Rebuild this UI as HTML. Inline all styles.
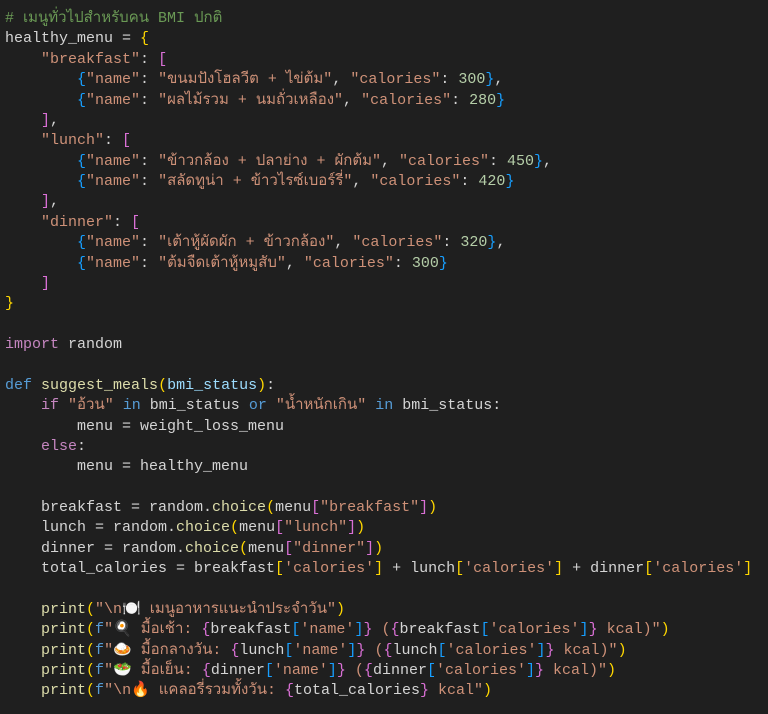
<!DOCTYPE html>
<html><head><meta charset="utf-8"><style>
html,body{margin:0;padding:0;background:#1f1f1f;width:768px;height:714px;overflow:hidden}
pre{margin:0;position:absolute;left:5px;top:9px;font-family:"Liberation Mono","DejaVu Sans Mono",monospace;font-size:15px;line-height:20.38px;color:#d4d4d4}
.c{color:#6a9955}.s{color:#ce9178}.k{color:#569cd6}.p{color:#c586c0}.f{color:#dcdcaa}.n{color:#b5cea8}.v{color:#9cdcfe}
.y{color:#ffd700}.m{color:#da70d6}.b{color:#179fff}
</style></head><body><pre><span class="c"># เมนูทั่วไปสำหรับคน BMI ปกติ</span>
healthy_menu = <span class="y">{</span>
    <span class="s">"breakfast"</span>: <span class="m">[</span>
        <span class="b">{</span><span class="s">"name"</span>: <span class="s">"ขนมปังโฮลวีต + ไข่ต้ม"</span>, <span class="s">"calories"</span>: <span class="n">300</span><span class="b">}</span>,
        <span class="b">{</span><span class="s">"name"</span>: <span class="s">"ผลไม้รวม + นมถั่วเหลือง"</span>, <span class="s">"calories"</span>: <span class="n">280</span><span class="b">}</span>
    <span class="m">]</span>,
    <span class="s">"lunch"</span>: <span class="m">[</span>
        <span class="b">{</span><span class="s">"name"</span>: <span class="s">"ข้าวกล้อง + ปลาย่าง + ผักต้ม"</span>, <span class="s">"calories"</span>: <span class="n">450</span><span class="b">}</span>,
        <span class="b">{</span><span class="s">"name"</span>: <span class="s">"สลัดทูน่า + ข้าวไรซ์เบอร์รี่"</span>, <span class="s">"calories"</span>: <span class="n">420</span><span class="b">}</span>
    <span class="m">]</span>,
    <span class="s">"dinner"</span>: <span class="m">[</span>
        <span class="b">{</span><span class="s">"name"</span>: <span class="s">"เต้าหู้ผัดผัก + ข้าวกล้อง"</span>, <span class="s">"calories"</span>: <span class="n">320</span><span class="b">}</span>,
        <span class="b">{</span><span class="s">"name"</span>: <span class="s">"ต้มจืดเต้าหู้หมูสับ"</span>, <span class="s">"calories"</span>: <span class="n">300</span><span class="b">}</span>
    <span class="m">]</span>
<span class="y">}</span>

<span class="p">import</span> random

<span class="k">def</span> <span class="f">suggest_meals</span><span class="y">(</span><span class="v">bmi_status</span><span class="y">)</span>:
    <span class="p">if</span> <span class="s">"อ้วน"</span> <span class="k">in</span> bmi_status <span class="k">or</span> <span class="s">"น้ำหนักเกิน"</span> <span class="k">in</span> bmi_status:
        menu = weight_loss_menu
    <span class="p">else</span>:
        menu = healthy_menu

    breakfast = random.<span class="f">choice</span><span class="y">(</span>menu<span class="m">[</span><span class="s">"breakfast"</span><span class="m">]</span><span class="y">)</span>
    lunch = random.<span class="f">choice</span><span class="y">(</span>menu<span class="m">[</span><span class="s">"lunch"</span><span class="m">]</span><span class="y">)</span>
    dinner = random.<span class="f">choice</span><span class="y">(</span>menu<span class="m">[</span><span class="s">"dinner"</span><span class="m">]</span><span class="y">)</span>
    total_calories = breakfast<span class="y">[</span><span class="s">'calories'</span><span class="y">]</span> + lunch<span class="y">[</span><span class="s">'calories'</span><span class="y">]</span> + dinner<span class="y">[</span><span class="s">'calories'</span><span class="y">]</span>

    <span class="f">print</span><span class="y">(</span><span class="s">"\n🍽️ เมนูอาหารแนะนำประจำวัน"</span><span class="y">)</span>
    <span class="f">print</span><span class="y">(</span><span class="k">f</span><span class="s">"🍳 มื้อเช้า: </span><span class="m">{</span>breakfast<span class="b">[</span><span class="s">'name'</span><span class="b">]</span><span class="m">}</span><span class="s"> (</span><span class="m">{</span>breakfast<span class="b">[</span><span class="s">'calories'</span><span class="b">]</span><span class="m">}</span><span class="s"> kcal)"</span><span class="y">)</span>
    <span class="f">print</span><span class="y">(</span><span class="k">f</span><span class="s">"🍛 มื้อกลางวัน: </span><span class="m">{</span>lunch<span class="b">[</span><span class="s">'name'</span><span class="b">]</span><span class="m">}</span><span class="s"> (</span><span class="m">{</span>lunch<span class="b">[</span><span class="s">'calories'</span><span class="b">]</span><span class="m">}</span><span class="s"> kcal)"</span><span class="y">)</span>
    <span class="f">print</span><span class="y">(</span><span class="k">f</span><span class="s">"🥗 มื้อเย็น: </span><span class="m">{</span>dinner<span class="b">[</span><span class="s">'name'</span><span class="b">]</span><span class="m">}</span><span class="s"> (</span><span class="m">{</span>dinner<span class="b">[</span><span class="s">'calories'</span><span class="b">]</span><span class="m">}</span><span class="s"> kcal)"</span><span class="y">)</span>
    <span class="f">print</span><span class="y">(</span><span class="k">f</span><span class="s">"\n🔥 แคลอรี่รวมทั้งวัน: </span><span class="m">{</span>total_calories<span class="m">}</span><span class="s"> kcal"</span><span class="y">)</span></pre></body></html>
